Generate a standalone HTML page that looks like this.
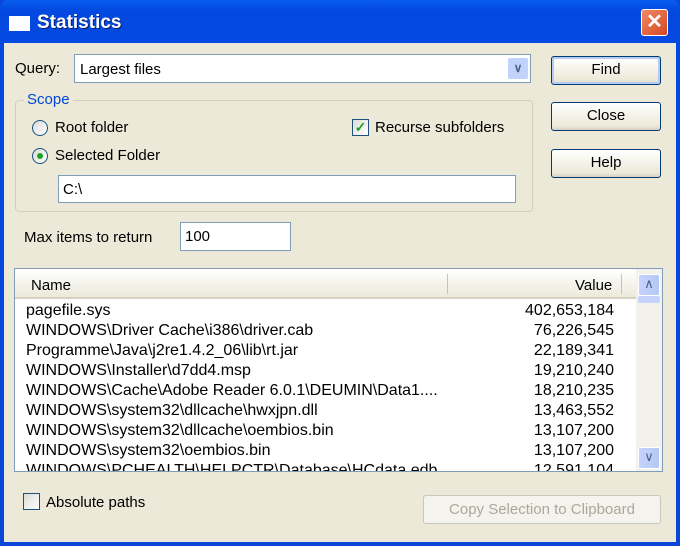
<!DOCTYPE html><html><head><style>
*{margin:0;padding:0;box-sizing:border-box}
body{width:680px;height:546px;overflow:hidden;font-family:"Liberation Sans",sans-serif;font-size:15px;background:#0a46d8}
.win{position:absolute;left:0;top:0;width:680px;height:546px;background:linear-gradient(#0a5ef0,#0349e0 10px,#0a46d8);border-radius:8px 8px 0 0}
.body{position:absolute;left:4px;top:43px;width:672px;height:499px;background:#ece9d8}
.a{position:absolute}
.t{position:absolute;white-space:nowrap;color:#000}
.btn{position:absolute;border:1px solid #003c74;border-radius:3px;background:linear-gradient(#fff,#ece9d8 85%,#d6d0c5);text-align:center;line-height:26px}
.box{position:absolute;background:#fff;border:1px solid #7f9db9}
.radio{position:absolute;width:16px;height:16px;border-radius:50%;border:1px solid #1c5180;background:linear-gradient(135deg,#dcdcd5,#fff)}
.chk{position:absolute;width:17px;height:17px;border:1px solid #1c5180;background:linear-gradient(135deg,#dcdcd5,#fff)}
.row{position:absolute;left:26px;width:600px;height:20px;line-height:17px;font-size:16px;white-space:nowrap}
.row span{position:absolute;right:12px}
.sbtn{position:absolute;width:21px;height:20px;border-radius:2px;background:linear-gradient(90deg,#c5d3fc,#b4c8f6);border:1px solid #fff;color:#4d6185;font-size:11px;text-align:center;line-height:18px}
</style></head><body>
<div class="win">
<div class="a" style="left:9px;top:16px;width:21px;height:15px;background:#fff;border-top:3px solid #fff"></div>
<div class="t" style="left:37px;top:12px;color:#fff;font-weight:bold;font-size:19px;text-shadow:1px 1px #0a1e6a">Statistics</div>
<div class="a" style="left:641px;top:9px;width:27px;height:27px;border:1px solid #fff;border-radius:3px;background:linear-gradient(135deg,#f08a6a,#d6461c);color:#fff;font-size:20px;text-align:center;line-height:25px;font-weight:bold">✕</div>
<div class="body"></div>
<div class="t" style="left:15px;top:60px">Query:</div>
<div class="box" style="left:74px;top:54px;width:457px;height:29px"></div>
<div class="t" style="left:80px;top:61px">Largest files</div>
<div class="a" style="left:508px;top:58px;width:20px;height:21px;background:#c1d3fb;border-radius:2px;color:#4d6185;text-align:center;font-size:12px;line-height:21px;font-weight:bold">&#8744;</div>
<div class="btn" style="left:551px;top:56px;width:110px;height:29px;border-color:#003c74;box-shadow:inset 0 0 0 2px #b6cbf4">Find</div>
<div class="btn" style="left:551px;top:102px;width:110px;height:29px">Close</div>
<div class="btn" style="left:551px;top:149px;width:110px;height:29px">Help</div>
<div class="a" style="left:15px;top:100px;width:518px;height:112px;border:1px solid #d0d0bf;border-radius:4px"></div>
<div class="t" style="left:24px;top:91px;color:#0046d5;background:#ece9d8;padding:0 3px">Scope</div>
<div class="radio" style="left:32px;top:120px"></div>
<div class="t" style="left:55px;top:119px">Root folder</div>
<div class="radio" style="left:32px;top:148px"></div>
<div class="a" style="left:37px;top:153px;width:6px;height:6px;border-radius:50%;background:#21a121"></div>
<div class="t" style="left:55px;top:147px">Selected Folder</div>
<div class="chk" style="left:352px;top:119px;color:#21a121;font-size:14px;line-height:15px;text-align:center;font-weight:bold">✓</div>
<div class="t" style="left:375px;top:119px">Recurse subfolders</div>
<div class="box" style="left:58px;top:175px;width:458px;height:28px"></div>
<div class="t" style="left:63px;top:181px">C:\</div>
<div class="t" style="left:24px;top:229px">Max items to return</div>
<div class="box" style="left:180px;top:222px;width:111px;height:29px"></div>
<div class="t" style="left:185px;top:228px">100</div>
<div class="box" style="left:14px;top:268px;width:649px;height:204px;overflow:hidden">
<div class="a" style="left:0;top:0;width:622px;height:30px;background:linear-gradient(#fff,#ebeadb);border-bottom:2px solid #d6d2c2"></div>
<div class="a" style="left:432px;top:5px;width:1px;height:20px;background:#c7c5b2"></div>
<div class="a" style="left:606px;top:5px;width:1px;height:20px;background:#c7c5b2"></div>
<div class="t" style="left:16px;top:8px">Name</div>
<div class="t" style="left:560px;top:8px">Value</div>
<div class="a" style="left:621px;top:0;width:27px;height:202px;background:#f3f1ec"></div>
<div class="sbtn" style="left:623px;top:5px;width:22px;height:22px;font-size:13px">&#8743;</div>
<div class="a" style="left:623px;top:27px;width:22px;height:7px;background:#c5d3fc;border-radius:2px"></div>
<div class="sbtn" style="left:623px;top:178px;width:22px;height:22px;font-size:13px">&#8744;</div>
</div>
<div class="row" style="top:302px">pagefile.sys<span>402,653,184</span></div>
<div class="row" style="top:322px">WINDOWS\Driver Cache\i386\driver.cab<span>76,226,545</span></div>
<div class="row" style="top:342px">Programme\Java\j2re1.4.2_06\lib\rt.jar<span>22,189,341</span></div>
<div class="row" style="top:362px">WINDOWS\Installer\d7dd4.msp<span>19,210,240</span></div>
<div class="row" style="top:382px">WINDOWS\Cache\Adobe Reader 6.0.1\DEUMIN\Data1....<span>18,210,235</span></div>
<div class="row" style="top:402px">WINDOWS\system32\dllcache\hwxjpn.dll<span>13,463,552</span></div>
<div class="row" style="top:422px">WINDOWS\system32\dllcache\oembios.bin<span>13,107,200</span></div>
<div class="row" style="top:442px">WINDOWS\system32\oembios.bin<span>13,107,200</span></div>
<div class="a" style="left:15px;top:462px;width:620px;height:9px;overflow:hidden"><div class="row" style="left:11px;top:0">WINDOWS\PCHEALTH\HELPCTR\Database\HCdata.edb<span>12,591,104</span></div></div>
<div class="chk" style="left:23px;top:493px"></div>
<div class="t" style="left:46px;top:494px">Absolute paths</div>
<div class="a" style="left:423px;top:495px;width:238px;height:29px;border:1px solid #c9c7ba;border-radius:3px;background:#f4f3ee;color:#aca899;text-align:center;line-height:27px">Copy Selection to Clipboard</div>
</div>
</body></html>
